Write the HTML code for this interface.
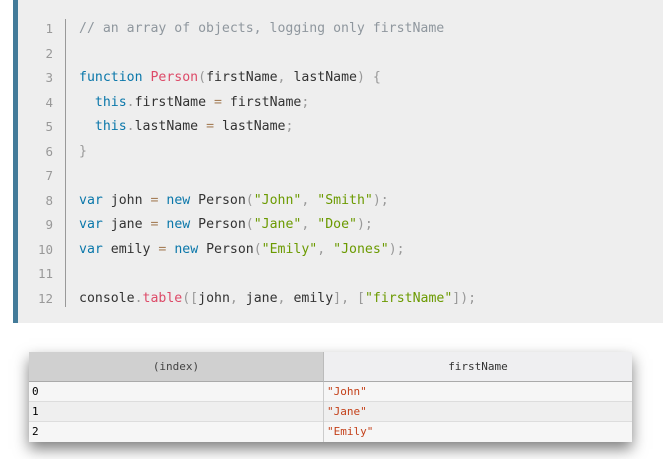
<!DOCTYPE html>
<html><head><meta charset="utf-8"><style>
body{margin:0;background:#fff;width:663px;height:459px;overflow:hidden;position:relative;font-family:"DejaVu Sans Mono","Liberation Mono",monospace;}
.code{position:absolute;left:13px;top:0;width:650px;height:323px;background:#eeeeee;border-left:5px solid #437b99;box-sizing:border-box;}
.rule{position:absolute;left:65px;top:19px;width:1px;height:288px;background:#999;}
.ln{position:absolute;left:0;width:53px;text-align:right;color:#999;font-size:12.5px;}
.l{position:absolute;left:79px;font-size:13.2px;color:#333;white-space:pre;line-height:16px;}
.c{color:#8f979e}.k{color:#0a77aa}.f{color:#dd4a68}.s{color:#6b9a00}.p{color:#999}.o{color:#a67f59}
.tbl{position:absolute;left:29px;top:352px;width:603px;height:90px;box-shadow:0 7px 14px rgba(0,0,0,.5);font-size:11px;}
.tbl div{position:absolute;box-sizing:border-box;}
.w{position:absolute;left:0;top:2px;width:663px;height:320px;}
</style></head><body>
<div class="code"></div>
<div class="rule"></div>
<div class="w">
<div class="ln" style="top:19px">1</div>
<div class="ln" style="top:44px">2</div>
<div class="ln" style="top:68px">3</div>
<div class="ln" style="top:93px">4</div>
<div class="ln" style="top:117px">5</div>
<div class="ln" style="top:142px">6</div>
<div class="ln" style="top:166px">7</div>
<div class="ln" style="top:191px">8</div>
<div class="ln" style="top:215px">9</div>
<div class="ln" style="top:240px">10</div>
<div class="ln" style="top:264px">11</div>
<div class="ln" style="top:289px">12</div>
<div class="l" style="top:19px"><span class="c">// an array of objects, logging only firstName</span></div>
<div class="l" style="top:68px"><span class="k">function</span> <span class="f">Person</span><span class="p">(</span>firstName<span class="p">,</span> lastName<span class="p">)</span> <span class="p">{</span></div>
<div class="l" style="top:93px">  <span class="k">this</span><span class="p">.</span>firstName <span class="o">=</span> firstName<span class="p">;</span></div>
<div class="l" style="top:117px">  <span class="k">this</span><span class="p">.</span>lastName <span class="o">=</span> lastName<span class="p">;</span></div>
<div class="l" style="top:142px"><span class="p">}</span></div>
<div class="l" style="top:191px"><span class="k">var</span> john <span class="o">=</span> <span class="k">new</span> Person<span class="p">(</span><span class="s">"John"</span><span class="p">,</span> <span class="s">"Smith"</span><span class="p">);</span></div>
<div class="l" style="top:215px"><span class="k">var</span> jane <span class="o">=</span> <span class="k">new</span> Person<span class="p">(</span><span class="s">"Jane"</span><span class="p">,</span> <span class="s">"Doe"</span><span class="p">);</span></div>
<div class="l" style="top:240px"><span class="k">var</span> emily <span class="o">=</span> <span class="k">new</span> Person<span class="p">(</span><span class="s">"Emily"</span><span class="p">,</span> <span class="s">"Jones"</span><span class="p">);</span></div>
<div class="l" style="top:289px">console<span class="p">.</span><span class="f">table</span><span class="p">([</span>john<span class="p">,</span> jane<span class="p">,</span> emily<span class="p">],</span> <span class="p">[</span><span class="s">"firstName"</span><span class="p">]);</span></div>
</div>

<div class="tbl">
 <div style="left:0;top:0;width:294px;height:30px;background:#d0d0d0;border-bottom:1px solid #aaa;text-align:center;line-height:29px;color:#444">(index)</div>
 <div style="left:294px;top:0;width:309px;height:30px;background:#efeff1;border-left:1px solid #bbb;border-bottom:1px solid #aaa;text-align:center;line-height:29px;color:#333">firstName</div>
 <div style="left:0;top:30px;width:603px;height:20px;background:#f6f6f6;border-bottom:1px solid #ddd"></div>
 <div style="left:0;top:50px;width:603px;height:20px;background:#efefef;border-bottom:1px solid #ddd"></div>
 <div style="left:0;top:70px;width:603px;height:20px;background:#f6f6f6"></div>
 <div style="left:294px;top:30px;width:1px;height:60px;background:#ccc"></div>
 <div style="left:3px;top:30px;line-height:20px;color:#000">0</div>
 <div style="left:3px;top:50px;line-height:20px;color:#000">1</div>
 <div style="left:3px;top:70px;line-height:20px;color:#000">2</div>
 <div style="left:298px;top:30px;line-height:20px;color:#c4411a">"John"</div>
 <div style="left:298px;top:50px;line-height:20px;color:#c4411a">"Jane"</div>
 <div style="left:298px;top:70px;line-height:20px;color:#c4411a">"Emily"</div>
</div>
</body></html>
